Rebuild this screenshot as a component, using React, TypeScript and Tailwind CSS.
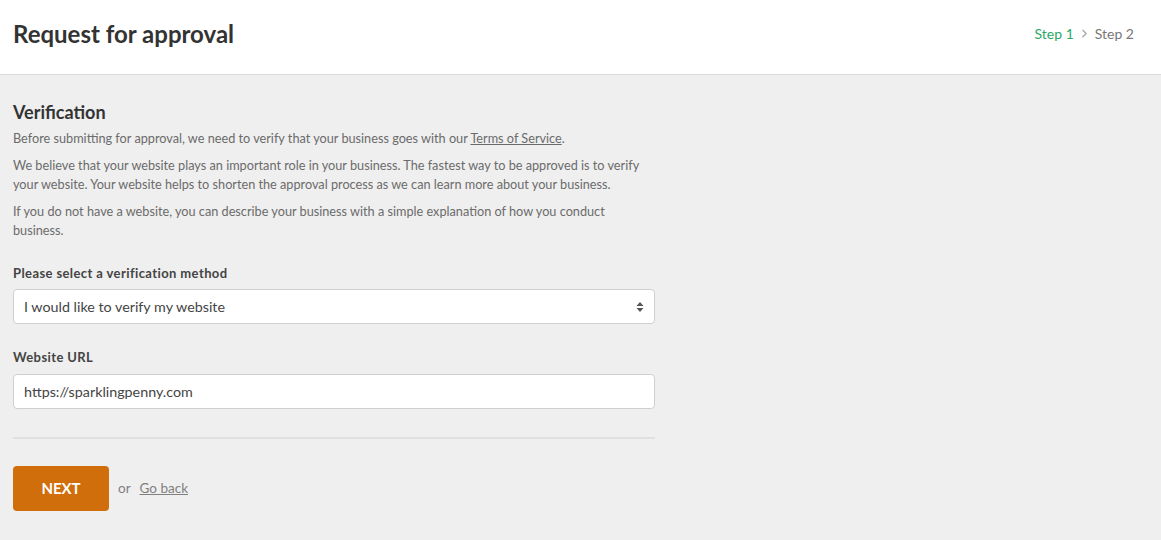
import { ChevronRight } from "lucide-react"

function UpDown() {
  return (
    <svg width="8" height="12" viewBox="0 0 8 12" className="text-[#555]">
      <path d="M4 1 L7.5 5 L0.5 5 Z" fill="currentColor" />
      <path d="M4 11 L7.5 7 L0.5 7 Z" fill="currentColor" />
    </svg>
  )
}

export default function App() {
  return (
    <div className="min-h-[540px] bg-[#efefef] font-['Lato',sans-serif] text-[#333]">
      <header className="h-[75px] bg-white border-b border-[#dcdcdc] flex items-center justify-between pl-[13px] pr-[27px]">
        <h1 className="text-[24px] font-bold text-[#333] leading-none -mt-[7px]">Request for approval</h1>
        <div className="flex items-center gap-[4px] text-[14px] -mt-[8px]">
          <span className="text-[#2aa866]">Step 1</span>
          <ChevronRight size={13} strokeWidth={2.5} className="text-[#a8a8a8]" />
          <span className="text-[#777]">Step 2</span>
        </div>
      </header>

      <main className="w-[642px] ml-[13px] pt-[26px]">
        <h2 className="text-[18px] font-bold leading-[22px]">Verification</h2>
        <div className="mt-[6px] flex flex-col gap-[8px] text-[12.7px] leading-[19px] text-[#6b6b6b]">
          <p>
            Before submitting for approval, we need to verify that your business goes with our{" "}
            <a className="underline">Terms of Service</a>.
          </p>
          <p>
            We believe that your website plays an important role in your business. The fastest way to be approved is to verify
            your website. Your website helps to shorten the approval process as we can learn more about your business.
          </p>
          <p>
            If you do not have a website, you can describe your business with a simple explanation of how you conduct
            business.
          </p>
        </div>

        <label className="block mt-[24px] text-[13px] tracking-[0.4px] font-bold leading-[19px] text-[#444]">
          Please select a verification method
        </label>
        <div className="mt-[6px] h-[35px] bg-white border border-[#cfcfcf] rounded-[4px] flex items-center justify-between pl-[10px] pr-[10px] text-[14.3px] text-[#444]">
          <span>I would like to verify my website</span>
          <UpDown />
        </div>

        <label className="block mt-[24px] text-[13px] tracking-[0.4px] font-bold leading-[19px] text-[#444]">Website URL</label>
        <div className="mt-[7px] h-[35px] bg-white border border-[#cfcfcf] rounded-[4px] flex items-center pl-[10px] text-[14.3px] text-[#444]">
          https://sparklingpenny.com
        </div>

        <div className="mt-[28px] border-t-2 border-[#e0e0e0]" />

        <div className="mt-[27px] flex items-center">
          <button className="w-[96px] h-[45px] rounded-[4px] bg-[#cf6e0a] text-white font-bold text-[15px]">NEXT</button>
          <span className="ml-[9px] text-[13.5px] text-[#808080]">or</span>
          <a className="ml-[9px] text-[13.5px] text-[#808080] underline">Go back</a>
        </div>
      </main>
    </div>
  )
}
